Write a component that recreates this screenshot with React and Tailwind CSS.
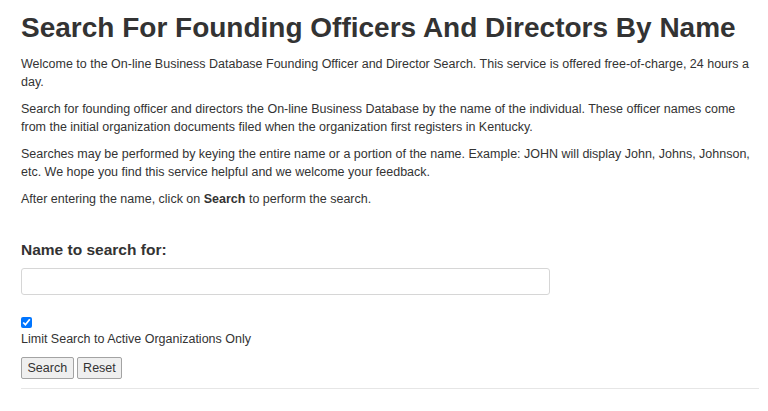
import { useState } from "react";

export default function App() {
  const [name, setName] = useState("");
  const [activeOnly, setActiveOnly] = useState(true);

  return (
    <main
      className="min-h-screen bg-white pl-[21px] pr-[9px] text-[#333333]"
      style={{ fontFamily: '"Liberation Sans", Arial, Helvetica, sans-serif' }}
    >
      <h1 className="pt-[11px] text-[28px] font-bold leading-[34px]">
        Search For Founding Officers And Directors By Name
      </h1>

      <div className="mt-[10px] text-[12.5px] leading-[18px]">
        <p className="mb-[9px]">
          Welcome to the On-line Business Database Founding Officer and Director Search. This
          service is offered free-of-charge, 24 hours a day.
        </p>
        <p className="mb-[9px]">
          Search for founding officer and directors the On-line Business Database by the name of
          the individual. These officer names come from the initial organization documents filed
          when the organization first registers in Kentucky.
        </p>
        <p className="mb-[9px]">
          Searches may be performed by keying the entire name or a portion of the name. Example:
          JOHN will display John, Johns, Johnson, etc. We hope you find this service helpful and
          we welcome your feedback.
        </p>
        <p>
          After entering the name, click on <strong>Search</strong> to perform the search.
        </p>
      </div>

      <form className="mt-[32px]" onSubmit={(e) => e.preventDefault()}>
        <label htmlFor="name" className="block text-[15.5px] font-bold leading-[20px]">
          Name to search for:
        </label>
        <input
          id="name"
          type="text"
          value={name}
          onChange={(e) => setName(e.target.value)}
          className="mt-[8px] block h-[27px] w-[529px] rounded-[3px] border border-[#d6d6d6] px-2 text-[12.5px] outline-none"
        />

        <div className="mt-[22px] flex flex-col text-[12.5px] leading-[18px]">
          <input
            type="checkbox"
            checked={activeOnly}
            onChange={(e) => setActiveOnly(e.target.checked)}
            className="m-0 h-[11px] w-[11px]"
          />
          <span className="mt-[2px]">Limit Search to Active Organizations Only</span>
        </div>

        <div className="mt-[9px] flex gap-[3px]">
          <button
            type="submit"
            className="h-[22px] rounded-[2px] border border-[#a3a3a3] bg-[#efefef] px-[5.5px] text-[12.5px] leading-[18px]"
          >
            Search
          </button>
          <button
            type="reset"
            onClick={() => setName("")}
            className="h-[22px] rounded-[2px] border border-[#a3a3a3] bg-[#efefef] px-[5.5px] text-[12.5px] leading-[18px]"
          >
            Reset
          </button>
        </div>
      </form>

      <hr className="mt-[9px] border-t border-[#e6e6e6]" />
    </main>
  );
}
